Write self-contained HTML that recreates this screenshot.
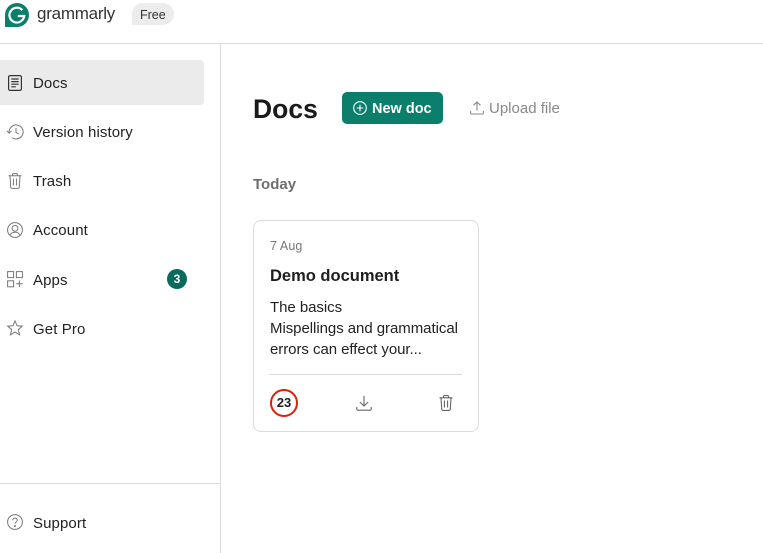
<!DOCTYPE html>
<html><head><meta charset="utf-8">
<style>
html,body{margin:0;padding:0;background:#fff}
#p{position:relative;width:763px;height:553px;overflow:hidden;background:#fff;font-family:"Liberation Sans",sans-serif;color:#1f1f1f}
.t{position:absolute;white-space:nowrap;line-height:20px}
.l{position:absolute;background:#dcdcdc}
svg{position:absolute;overflow:visible;fill:none}
.n{font-size:15px;left:33px;color:#222;letter-spacing:.1px}
</style></head><body><div id="p">
<svg style="left:5px;top:3px" width="24" height="24" viewBox="0 0 24 24"><path d="M12 0A12 12 0 1 1 12 24H0V12A12 12 0 0 1 12 0Z" fill="#0b7f6c"/><path d="M17.3 7.1A7.4 7.4 0 1 0 19.2 13H12.800" stroke="#fff" stroke-width="2.2"/></svg>
<div class="t" style="left:37px;top:4px;font-size:17px;color:#333;letter-spacing:-.25px">grammarly</div>
<div style="position:absolute;left:132px;top:3px;width:42px;height:22px;background:#ececec;border-radius:11px 11px 11px 0"></div>
<div class="t" style="left:140px;top:5px;font-size:12.500px;color:#333">Free</div>
<div class="l" style="left:0;top:43px;width:763px;height:1px"></div>
<div class="l" style="left:220px;top:44px;width:1px;height:509px"></div>
<div class="l" style="left:0;top:483px;width:220px;height:1px"></div>
<div style="position:absolute;left:0;top:60px;width:204px;height:45px;background:#ebebeb;border-radius:0 4px 4px 0"></div>

<svg style="left:8px;top:75px" width="14" height="16" viewBox="0 0 14 16" stroke="#333" stroke-width="1.2"><rect x=".6" y=".6" width="12.8" height="14.8" rx="1.5"/><path d="M3.3 4h7.4M3.3 6.6h7.4M3.3 9.2h7.4M3.3 11.8h4.5"/></svg>
<div class="t n" style="top:74px">Docs</div>

<svg style="left:6px;top:124px" width="18" height="16" viewBox="0 0 18 16" stroke="#777" stroke-width="1"><path d="M3.2 9A7 7 0 1 1 6 13.6"/><path d="M.8 6.8L3.2 9.2L5.6 6.8M10 4V8.4L12.8 10"/></svg>
<div class="t n" style="top:123px">Version history</div>

<svg style="left:8px;top:173px" width="14" height="16" viewBox="0 0 14 16" stroke="#777" stroke-width="1"><path d="M.5 2.8H13.5M4.500 2.800V1.600Q4.500.6 5.500.6H8.500Q9.500.6 9.500 1.600V2.800M2 2.800L2.700 14Q2.800 15.400 4.200 15.400H9.800Q11.200 15.400 11.300 14L12 2.800M5.400 5.500V12.500M8.600 5.500V12.500"/></svg>
<div class="t n" style="top:172px">Trash</div>

<svg style="left:7px;top:222px" width="16" height="16" viewBox="0 0 16 16" stroke="#777" stroke-width="1"><circle cx="8" cy="8" r="7.400"/><circle cx="8" cy="6.300" r="2.900"/><path d="M3 13.200C4 10.800 6 10.200 8 10.200S12 10.800 13 13.200"/></svg>
<div class="t n" style="top:221px">Account</div>

<svg style="left:7px;top:271px" width="16" height="17" viewBox="0 0 16 17" stroke="#777" stroke-width="1"><rect x=".6" y=".6" width="6" height="6"/><rect x="9.400" y=".6" width="6" height="6"/><rect x=".6" y="9.800" width="6" height="6"/><path d="M12.400 9.500V16M9.200 12.800H15.800"/></svg>
<div class="t n" style="top:271px">Apps</div>
<div style="position:absolute;left:167px;top:269px;width:20px;height:20px;border-radius:50%;background:#0a6b5c;color:#fff;font-size:12px;font-weight:bold;line-height:20px;text-align:center">3</div>

<svg style="left:7px;top:320px" width="16" height="16" viewBox="0 0 16 16" stroke="#777" stroke-width="1"><path d="M8 .9L10.100 5.800L15.300 6.200L11.300 9.600L12.600 14.800L8 12L3.400 14.800L4.700 9.600L.7 6.200L5.900 5.800Z"/></svg>
<div class="t n" style="top:320px">Get Pro</div>

<svg style="left:7px;top:514px" width="16" height="16" viewBox="0 0 16 16" stroke="#777" stroke-width="1"><circle cx="8" cy="8" r="7.400"/><path d="M5.800 6.200C5.800 3.400 10.300 3.400 10.300 6.100C10.300 7.800 8 7.900 8 9.800"/><circle cx="8" cy="12" r=".5" fill="#777"/></svg>
<div class="t n" style="top:514px">Support</div>

<div class="t" style="left:253px;top:94px;font-size:26.500px;line-height:30px;font-weight:bold;color:#1a1a1a">Docs</div>
<div style="position:absolute;left:342px;top:92px;width:101px;height:32px;background:#0b7f6c;border-radius:5px"></div>
<svg style="left:353px;top:101px" width="14" height="14" viewBox="0 0 14 14" stroke="#fff" stroke-width="1.1"><circle cx="7" cy="7" r="6.300"/><path d="M7 3.800V10.200M3.800 7H10.200"/></svg>
<div class="t" style="left:372px;top:99px;font-size:14.5px;font-weight:bold;color:#fff">New doc</div>
<svg style="left:470px;top:101px" width="14" height="14" viewBox="0 0 14 14" stroke="#888" stroke-width="1.1"><path d="M7 9.500V1M3.500 4.300L7 1L10.500 4.300M.6 10V12Q.6 13 1.600 13H12.400Q13.400 13 13.400 12V10"/></svg>
<div class="t" style="left:489px;top:99px;font-size:15px;color:#888">Upload file</div>
<div class="t" style="left:253px;top:175px;font-size:15px;font-weight:bold;color:#6f6f6f">Today</div>

<div style="position:absolute;left:253px;top:220px;width:224px;height:210px;border:1px solid #dcdcdc;border-radius:8px"></div>
<div class="t" style="left:270px;top:236px;font-size:12.500px;color:#777;letter-spacing:.1px">7 Aug</div>
<div class="t" style="left:270px;top:266px;font-size:16.500px;font-weight:bold;color:#1f1f1f">Demo document</div>
<div class="t" style="left:270px;top:297px;font-size:15px;line-height:21px;color:#222;letter-spacing:-.05px">The basics<br>Mispellings and grammatical<br>errors can effect your...</div>
<div class="l" style="left:269px;top:374px;width:193px;height:1px"></div>
<div style="position:absolute;left:270px;top:389px;width:24px;height:24px;border:2px solid #d9200f;border-radius:50%;font-size:13px;font-weight:bold;line-height:24px;text-align:center;color:#1f1f1f">23</div>
<svg style="left:356px;top:395px" width="16" height="16" viewBox="0 0 16 16" stroke="#666" stroke-width="1.1"><path d="M8 .8V11M3.800 7L8 11L12.200 7M.8 12V14Q.8 15.200 2 15.200H14Q15.200 15.200 15.200 14V12"/></svg>
<svg style="left:439px;top:395px" width="14" height="16" viewBox="0 0 14 16" stroke="#666" stroke-width="1.1"><path d="M.5 2.800H13.500M4.500 2.800V1.600Q4.500.6 5.500.6H8.500Q9.500.6 9.500 1.600V2.800M2 2.800L2.700 14Q2.800 15.400 4.200 15.400H9.800Q11.200 15.400 11.300 14L12 2.800M5.400 5.500V12.500M8.600 5.500V12.500"/></svg>
</div></body></html>
